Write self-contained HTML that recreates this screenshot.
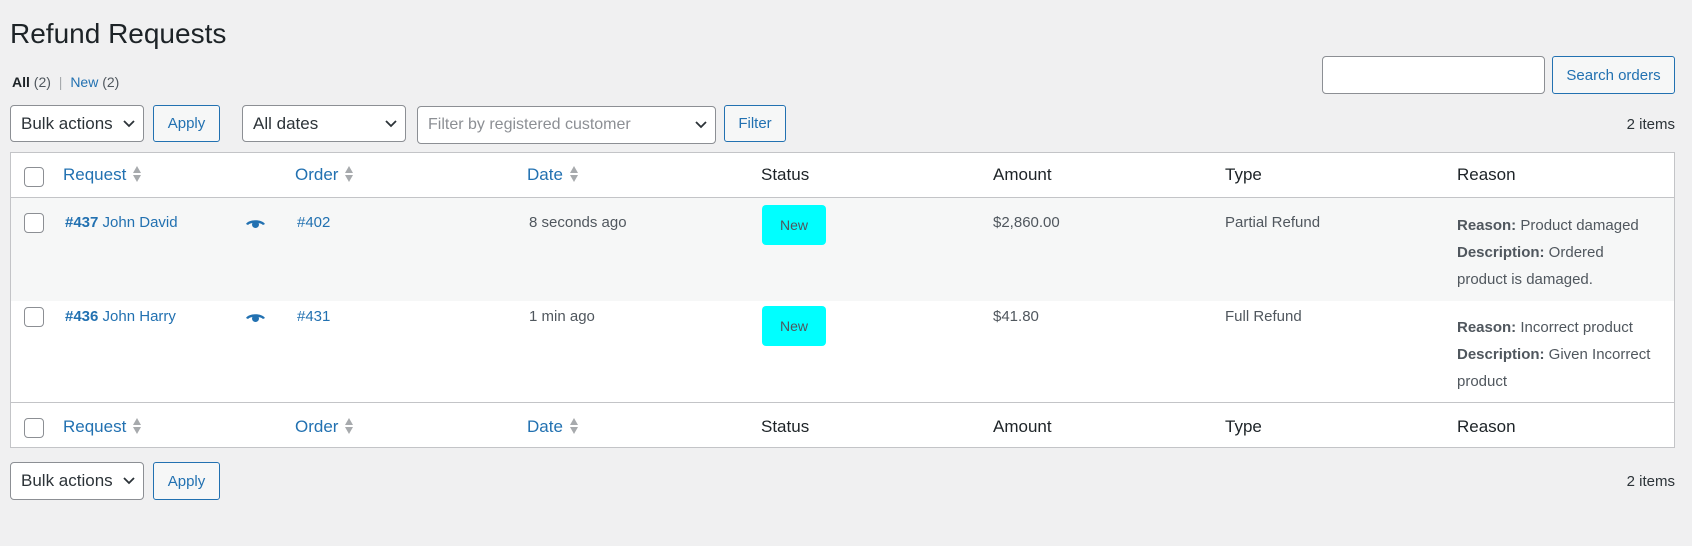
<!DOCTYPE html>
<html><head><meta charset="utf-8"><style>
*{box-sizing:border-box;margin:0;padding:0}
body{width:1692px;height:546px;background:#f0f0f1;font-family:"Liberation Sans",sans-serif;color:#50575e;font-size:15px;position:relative;overflow:hidden}
.a{position:absolute;white-space:nowrap}
a,.lk{color:#2271b1;text-decoration:none}
.sel{position:absolute;background:#fff;border:1px solid #8c8f94;border-radius:4px;font-size:17px;color:#2c3338;padding-left:10px;display:flex;align-items:center}
.sel svg{position:absolute;right:8px;top:50%;margin-top:-5px}
.btn{position:absolute;background:#f6f7f7;border:1px solid #2271b1;border-radius:3px;color:#2271b1;font-size:15px;display:flex;align-items:center;justify-content:center}
.tbl{position:absolute;left:10px;top:152px;width:1665px;height:296px;background:#fff;border:1px solid #c3c4c7}
.cb{position:absolute;width:20px;height:20px;border:1px solid #8c8f94;border-radius:4px;background:#fff}
.h{position:absolute;font-size:17px;color:#1d2327;white-space:nowrap}
.h.l{color:#2271b1}
.sort{display:inline-block;vertical-align:middle;margin-left:6px;width:10px;height:18px;position:relative;top:-2px}
.badge{position:absolute;width:64px;height:40px;background:#00ffff;border-radius:4px;color:#50575e;font-size:14px;display:flex;align-items:center;justify-content:center}
b{color:#50575e}
</style></head><body>
<div class="a" style="left:10px;top:18px;font-size:28px;color:#1d2327">Refund Requests</div>
<div class="a" style="left:12px;top:74px;font-size:14px"><span style="color:#1d2327;font-weight:bold">All</span> (2) <span style="color:#a7aaad;margin:0 4px">|</span> <span class="lk">New</span> (2)</div>

<div style="position:absolute;left:1322px;top:56px;width:223px;height:38px;background:#fff;border:1px solid #8c8f94;border-radius:4px"></div>
<div class="btn" style="left:1552px;top:56px;width:123px;height:38px">Search orders</div>

<div class="sel" style="left:10px;top:105px;width:134px;height:37px">Bulk actions<svg width="12" height="9" viewBox="0 0 12 9"><path d="M1 2l5 5 5-5" fill="none" stroke="#2c3338" stroke-width="1.8"/></svg></div>
<div class="btn" style="left:153px;top:105px;width:67px;height:37px">Apply</div>
<div class="sel" style="left:242px;top:105px;width:164px;height:37px">All dates<svg width="12" height="9" viewBox="0 0 12 9"><path d="M1 2l5 5 5-5" fill="none" stroke="#2c3338" stroke-width="1.8"/></svg></div>
<div class="sel" style="left:417px;top:106px;width:299px;height:38px;color:#8c8f94;font-size:16px">Filter by registered customer<svg width="12" height="9" viewBox="0 0 12 9"><path d="M1 2l5 5 5-5" fill="none" stroke="#2c3338" stroke-width="1.8"/></svg></div>
<div class="btn" style="left:724px;top:105px;width:62px;height:37px">Filter</div>
<div class="a" style="right:17px;top:116px;font-size:15px;color:#2c3338">2 items</div>

<div class="tbl">
<div style="position:absolute;left:0;top:44px;width:100%;height:1px;background:#c3c4c7"></div>
<div style="position:absolute;left:0;top:45px;width:100%;height:103px;background:#f6f7f7"></div>
<div style="position:absolute;left:0;top:249px;width:100%;height:1px;background:#c3c4c7"></div>

<div class="cb" style="left:13px;top:14px"></div>
<div class="h l" style="left:52px;top:12px">Request<svg class="sort" viewBox="0 0 10 18"><path d="M5 1l4 7H1z M5 17l4-7H1z" fill="#a7aaad"/></svg></div>
<div class="h l" style="left:284px;top:12px">Order<svg class="sort" viewBox="0 0 10 18"><path d="M5 1l4 7H1z M5 17l4-7H1z" fill="#a7aaad"/></svg></div>
<div class="h l" style="left:516px;top:12px">Date<svg class="sort" viewBox="0 0 10 18"><path d="M5 1l4 7H1z M5 17l4-7H1z" fill="#a7aaad"/></svg></div>
<div class="h" style="left:750px;top:12px">Status</div>
<div class="h" style="left:982px;top:12px">Amount</div>
<div class="h" style="left:1214px;top:12px">Type</div>
<div class="h" style="left:1446px;top:12px">Reason</div>

<div class="cb" style="left:13px;top:60px"></div>
<div class="a" style="left:54px;top:61px"><span class="lk"><b style="color:#2271b1">#437</b> John David</span></div>
<svg class="a" style="left:235px;top:65px" width="19" height="11" viewBox="0 0 19 11"><path d="M0 6C3 1 16 1 19 6L17 7C14 4 5 4 2 7z" fill="#2271b1"/><circle cx="9.5" cy="6.5" r="3.5" fill="#2271b1"/></svg>
<div class="a lk" style="left:286px;top:61px">#402</div>
<div class="a" style="left:518px;top:61px">8 seconds ago</div>
<div class="badge" style="left:751px;top:52px">New</div>
<div class="a" style="left:982px;top:61px">$2,860.00</div>
<div class="a" style="left:1214px;top:61px">Partial Refund</div>
<div class="a" style="left:1446px;top:59px;line-height:27px;white-space:normal;width:195px"><b>Reason:</b> Product damaged<br><b>Description:</b> Ordered product is damaged.</div>

<div class="cb" style="left:13px;top:154px"></div>
<div class="a" style="left:54px;top:155px"><span class="lk"><b style="color:#2271b1">#436</b> John Harry</span></div>
<svg class="a" style="left:235px;top:159px" width="19" height="11" viewBox="0 0 19 11"><path d="M0 6C3 1 16 1 19 6L17 7C14 4 5 4 2 7z" fill="#2271b1"/><circle cx="9.5" cy="6.5" r="3.5" fill="#2271b1"/></svg>
<div class="a lk" style="left:286px;top:155px">#431</div>
<div class="a" style="left:518px;top:155px">1 min ago</div>
<div class="badge" style="left:751px;top:153px">New</div>
<div class="a" style="left:982px;top:155px">$41.80</div>
<div class="a" style="left:1214px;top:155px">Full Refund</div>
<div class="a" style="left:1446px;top:161px;line-height:27px;white-space:normal;width:195px"><b>Reason:</b> Incorrect product<br><b>Description:</b> Given Incorrect product</div>

<div class="cb" style="left:13px;top:265px"></div>
<div class="h l" style="left:52px;top:264px">Request<svg class="sort" viewBox="0 0 10 18"><path d="M5 1l4 7H1z M5 17l4-7H1z" fill="#a7aaad"/></svg></div>
<div class="h l" style="left:284px;top:264px">Order<svg class="sort" viewBox="0 0 10 18"><path d="M5 1l4 7H1z M5 17l4-7H1z" fill="#a7aaad"/></svg></div>
<div class="h l" style="left:516px;top:264px">Date<svg class="sort" viewBox="0 0 10 18"><path d="M5 1l4 7H1z M5 17l4-7H1z" fill="#a7aaad"/></svg></div>
<div class="h" style="left:750px;top:264px">Status</div>
<div class="h" style="left:982px;top:264px">Amount</div>
<div class="h" style="left:1214px;top:264px">Type</div>
<div class="h" style="left:1446px;top:264px">Reason</div>
</div>

<div class="sel" style="left:10px;top:462px;width:134px;height:38px">Bulk actions<svg width="12" height="9" viewBox="0 0 12 9"><path d="M1 2l5 5 5-5" fill="none" stroke="#2c3338" stroke-width="1.8"/></svg></div>
<div class="btn" style="left:153px;top:462px;width:67px;height:38px">Apply</div>
<div class="a" style="right:17px;top:473px;font-size:15px;color:#2c3338">2 items</div>
</body></html>
